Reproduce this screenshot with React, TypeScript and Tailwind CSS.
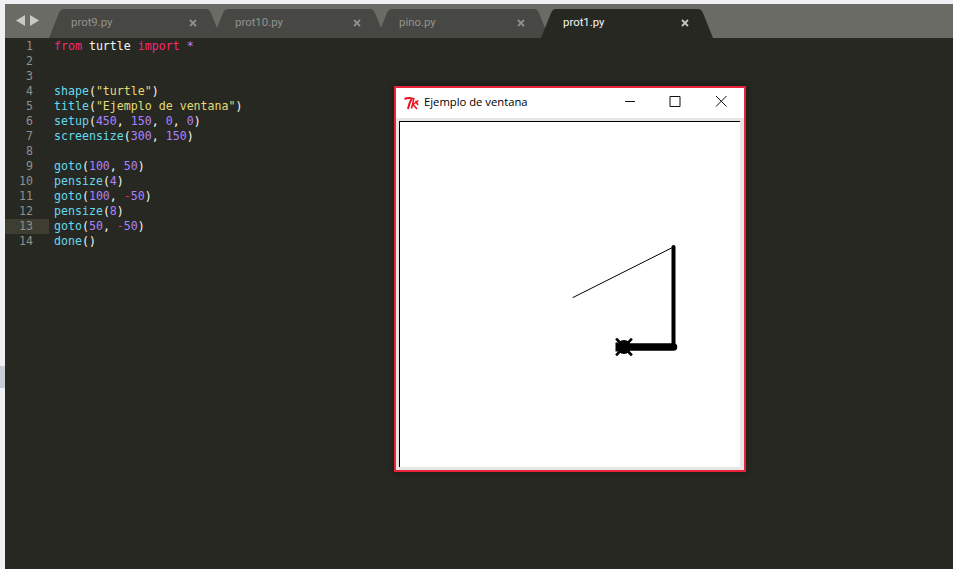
const mono = "font-['DejaVu_Sans_Mono',monospace]";

const pink = "text-[#f92672]";
const cyan = "text-[#66d9ef]";
const purple = "text-[#ae81ff]";
const yellow = "text-[#e6db74]";
const plain = "text-[#f8f8f2]";

type Part = [string, string];

const code: Part[][] = [
  [[pink, "from"], [plain, " turtle "], [pink, "import"], [plain, " "], [purple, "*"]],
  [],
  [],
  [[cyan, "shape"], [plain, "("], [yellow, '"turtle"'], [plain, ")"]],
  [[cyan, "title"], [plain, "("], [yellow, '"Ejemplo de ventana"'], [plain, ")"]],
  [[cyan, "setup"], [plain, "("], [purple, "450"], [plain, ", "], [purple, "150"], [plain, ", "], [purple, "0"], [plain, ", "], [purple, "0"], [plain, ")"]],
  [[cyan, "screensize"], [plain, "("], [purple, "300"], [plain, ", "], [purple, "150"], [plain, ")"]],
  [],
  [[cyan, "goto"], [plain, "("], [purple, "100"], [plain, ", "], [purple, "50"], [plain, ")"]],
  [[cyan, "pensize"], [plain, "("], [purple, "4"], [plain, ")"]],
  [[cyan, "goto"], [plain, "("], [purple, "100"], [plain, ", "], [pink, "-"], [purple, "50"], [plain, ")"]],
  [[cyan, "pensize"], [plain, "("], [purple, "8"], [plain, ")"]],
  [[cyan, "goto"], [plain, "("], [purple, "50"], [plain, ", "], [pink, "-"], [purple, "50"], [plain, ")"]],
  [[cyan, "done"], [plain, "()"]],
];

const tabs = [
  { name: "prot9.py" },
  { name: "prot10.py" },
  { name: "pino.py" },
  { name: "prot1.py", active: true },
];

function Tab({ name, active }: { name: string; active?: boolean }) {
  const fill = active ? "#272822" : "#474843";
  return (
    <div className={`relative h-[29px] w-[172px] shrink-0 -ml-[8px] first:ml-0 ${active ? "z-10" : ""}`}>
      <svg className="absolute inset-0 h-full w-full" viewBox="0 0 172 29">
        <path d="M0 29 L10 4 Q11.5 0 15 0 L157 0 Q160.5 0 162 4 L172 29 Z" fill={fill} />
      </svg>
      <div
        className={`relative flex h-full items-center justify-between pb-[2px] pl-[22px] pr-[24px] font-['Roboto',sans-serif] text-[11.4px] ${active ? "text-[#f5f5f5]" : "text-[#92938f]"}`}
      >
        <span>{name}</span>
        <svg width="8" height="8" viewBox="0 0 8 8" stroke={active ? "#c4c4c2" : "#8d8e8a"} strokeWidth="1.8">
          <path d="M1 1 L7 7 M7 1 L1 7" />
        </svg>
      </div>
    </div>
  );
}

function Editor() {
  return (
    <div className="flex w-[400px] pt-[1px]">
      <div className={`${mono} w-[44px] shrink-0 text-[11.6px] leading-[15px] text-[#8f908a]`}>
        {code.map((_, i) => (
          <div key={i} className={`h-[15px] pr-[16px] text-right ${i === 12 ? "bg-[#3e3d32]" : ""}`}>
            {i + 1}
          </div>
        ))}
      </div>
      <div className={`${mono} pl-[5px] text-[11.6px] leading-[15px] whitespace-pre`}>
        {code.map((line, i) => (
          <div key={i} className="h-[15px]">
            {line.map(([color, text], j) => (
              <span key={j} className={color}>
                {text}
              </span>
            ))}
          </div>
        ))}
      </div>
    </div>
  );
}

function TkLogo() {
  return (
    <svg width="16" height="13" viewBox="0 0 16 13" fill="none" stroke="#e8101c">
      <path d="M0.5 2 Q4 0.5 8 1.5 Q5.5 5 4 12" strokeWidth="2" />
      <path d="M10 1 L7.5 11.5 M14.5 3.5 L9 7.5 L13 12 M11.5 4 L14 8" strokeWidth="1.5" />
    </svg>
  );
}

function TurtleWindow() {
  return (
    <div className="absolute left-[394px] top-[86px] flex h-[386px] w-[352px] flex-col border-2 border-[#e8233a] bg-white shadow-[0_0_8px_rgba(0,0,0,0.45)]">
      <div className="flex h-[30px] shrink-0 items-center pl-[8px]">
        <TkLogo />
        <span className="ml-[4px] pb-[2px] font-['Open_Sans',sans-serif] text-[11.25px] text-black">Ejemplo de ventana</span>
        <div className="ml-auto flex items-center">
          <svg width="46" height="30" viewBox="0 0 46 30" stroke="#111" fill="none"><path d="M18 13.5 H28" /></svg>
          <svg width="45" height="30" viewBox="0 0 45 30" stroke="#111" fill="none"><path d="M17 8.5 H27 V18.5 H17 Z" /></svg>
          <svg width="46" height="30" viewBox="0 0 46 30" stroke="#111" fill="none"><path d="M18 8 L28.5 18.5 M28.5 8 L18 18.5" /></svg>
        </div>
      </div>
      <div className="flex-1 bg-[#e6e6e6] pb-[3px] pr-[3px]">
        <div className="relative ml-[3px] mt-[3px] h-[346px] w-[341px] border-l-[1.5px] border-t-[1.5px] border-black bg-white">
          <svg className="absolute inset-0 h-full w-full" viewBox="0 0 340 345">
            <g transform="translate(-400 -122)" fill="none" stroke="black" strokeLinecap="round">
              <path d="M573 297.5 L673.5 247" strokeWidth="1" />
              <path d="M673.5 247 V347" strokeWidth="4" />
              <path d="M673.5 347 H624" strokeWidth="7.5" />
              <circle cx="624" cy="347" r="7" fill="black" stroke="none" />
              <path d="M615.5 342.5 H618 V351.5 H615.5 Z" fill="black" stroke="none" />
              <path d="M617 339.5 L631 354.5 M631 339.5 L617 354.5" strokeWidth="2.6" strokeLinecap="square" />
            </g>
          </svg>
        </div>
      </div>
    </div>
  );
}

export default function App() {
  return (
    <div className="relative flex h-[569px] w-[953px] overflow-hidden bg-[#eef0f3]">
      <div className="flex w-[5px] shrink-0 flex-col pt-[366px]">
        <div className="h-[22px] bg-[#c9cdd7]" />
      </div>
      <div className="mt-[4px] flex flex-1 flex-col">
        <div className="flex h-[34px] shrink-0 items-end bg-[#6a6b65]">
          <div className="flex w-[44px] shrink-0 items-center gap-[5px] self-start pl-[11px] pt-[11px]">
            <svg width="9" height="11" viewBox="0 0 9 11" fill="#c8c9c5"><path d="M9 0 V11 L0 5.5 Z" /></svg>
            <svg width="9" height="11" viewBox="0 0 9 11" fill="#c8c9c5"><path d="M0 0 V11 L9 5.5 Z" /></svg>
          </div>
          <div className="flex items-end">
            {tabs.map((t) => (
              <Tab key={t.name} name={t.name} active={t.active} />
            ))}
          </div>
        </div>
        <div className="flex-1 bg-[#272822]">
          <Editor />
        </div>
      </div>
      <TurtleWindow />
    </div>
  );
}
